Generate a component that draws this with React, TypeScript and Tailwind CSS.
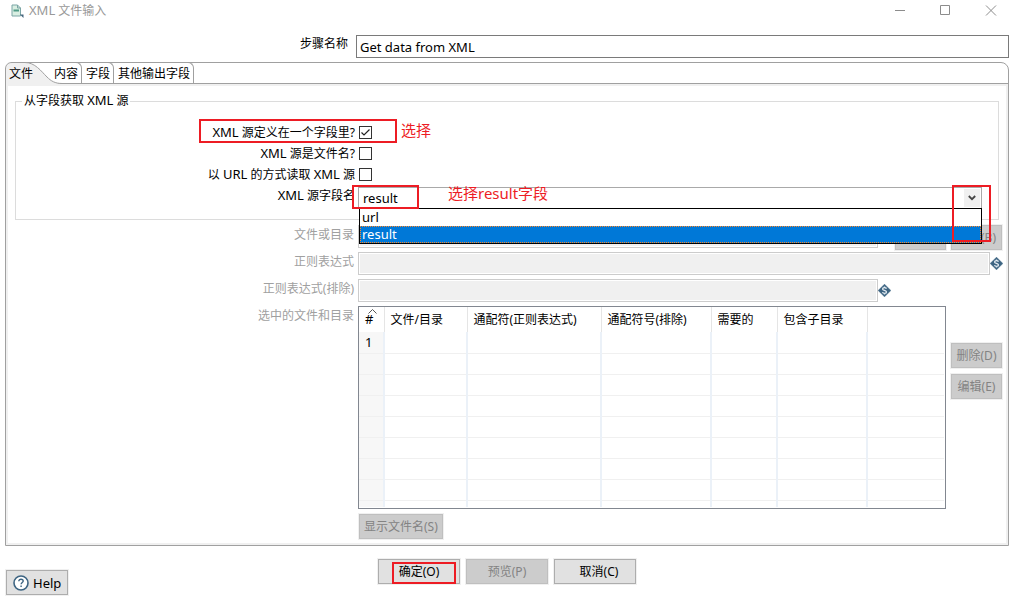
import { useState } from "react"
import type { ButtonHTMLAttributes, ReactNode } from "react"
import { clsx } from "clsx"

const tabs = ["文件", "内容", "字段", "其他输出字段"]

const columns = [
  { name: "文件/目录", width: "w-[83px]" },
  { name: "通配符(正则表达式)", width: "w-[134px]" },
  { name: "通配符号(排除)", width: "w-[110px]" },
  { name: "需要的", width: "w-[66px]" },
  { name: "包含子目录", width: "w-[90px]" },
  { name: "", width: "" },
]

const rows = [1, 2, 3, 4, 5, 6, 7, 8, 9]

// Latin letters are set one size larger than the Chinese text around them
function Latin({ children }: { children: ReactNode }) {
  return <span className="text-[13px] leading-none">{children}</span>
}

function DialogButton({ className, ...props }: ButtonHTMLAttributes<HTMLButtonElement>) {
  return (
    <button
      type="button"
      className={clsx(
        "h-[25px] shrink-0 whitespace-nowrap border border-[#adadad] bg-[#e1e1e1] outline outline-[#f0f0f0]",
        "disabled:border-[#bfbfbf] disabled:bg-[#cccccc] disabled:text-[#838383]",
        className
      )}
      {...props}
    />
  )
}

function VariableIcon() {
  return (
    <svg className="h-[13px] w-[13px] shrink-0" viewBox="0 0 13 13" aria-hidden="true">
      <path d="M6.5 0.2 12.8 6.5 6.5 12.8 0.2 6.5Z" fill="#3d6482" stroke="#3d6482" strokeLinejoin="round" strokeWidth="0.6" />
      <path
        d="M8.5 4.6C8.1 3.8 7.4 3.6 6.5 3.6 5.4 3.6 4.6 4.1 4.6 5 4.6 6.9 8.5 6 8.5 8 8.5 8.9 7.6 9.4 6.5 9.4 5.4 9.4 4.8 9 4.4 8.3M6.5 2.5V3.6M6.5 9.4V10.5"
        fill="none"
        stroke="#e6eef4"
        strokeWidth="1.3"
      />
    </svg>
  )
}

function TitleBar() {
  return (
    <header className="flex h-[22px] items-center pl-[11px] text-[#999999]">
      <svg className="mr-[5px] h-[14px] w-[13px]" viewBox="0 0 13 14" aria-hidden="true">
        <path d="M1 1H6.5L9.5 4V12H1Z" fill="#d9eee2" stroke="#7ba5a5" />
        <path d="M6.5 1V4H9.5" fill="none" stroke="#7ba5a5" />
        <path d="M2.5 6.5H8" stroke="#4e9a86" strokeWidth="2" />
        <path d="M9 10.5H12.5V14Z" fill="#44657d" />
      </svg>
      <h1 className="grow">
        <Latin>XML</Latin> 文件输入
      </h1>
      <div className="flex items-center gap-[33px] pr-[17px] pb-0.5">
        <button type="button" aria-label="Minimize">
          <svg className="h-[11px] w-[12px]" viewBox="0 0 12 11">
            <path d="M0 5.5H10" stroke="#8c8c8c" />
          </svg>
        </button>
        <button type="button" aria-label="Maximize">
          <svg className="h-[11px] w-[12px]" viewBox="0 0 12 11">
            <path d="M0.5 0.5H9.5V9.5H0.5Z" fill="none" stroke="#8c8c8c" />
          </svg>
        </button>
        <button type="button" aria-label="Close">
          <svg className="h-[11px] w-[12px]" viewBox="0 0 12 11">
            <path d="M1 0.5 11 10.5M11 0.5 1 10.5" stroke="#8c8c8c" />
          </svg>
        </button>
      </div>
    </header>
  )
}

function TabStrip() {
  return (
    <div role="tablist" className="flex h-[21px] border-b border-[#a0a0a0]">
      {tabs.map((tab, index) =>
        index === 0 ? (
          <button
            key={tab}
            type="button"
            role="tab"
            aria-selected="true"
            className="relative w-[44px] pt-0.5 pl-[3px] text-left"
          >
            <svg className="absolute -top-px -left-px h-[23px] w-[58px]" viewBox="0 0 58 23" aria-hidden="true">
              <path
                d="M0.5 23V7C0.5 3 3 0.5 7 0.5H20C30 0.5 36 9 42 15 46 19 50 21.5 57 21.5V23Z"
                fill="#f0f0f0"
              />
              <path
                d="M0.5 23V7C0.5 3 3 0.5 7 0.5H20C30 0.5 36 9 42 15 46 19 50 21.5 57 21.5"
                fill="none"
                stroke="#a0a0a0"
              />
            </svg>
            <span className="relative">{tab}</span>
          </button>
        ) : (
          <button
            key={tab}
            type="button"
            role="tab"
            aria-selected="false"
            className="-mt-px h-[21px] rounded-tr-md border-t border-r border-[#a0a0a0] pt-0.5 pr-[3px] pl-1"
          >
            {tab}
          </button>
        )
      )}
    </div>
  )
}

function CheckRow({ id, label, defaultChecked }: { id: string; label: ReactNode; defaultChecked?: boolean }) {
  return (
    <div className="flex h-[21px] items-center gap-1">
      <label htmlFor={id} className="w-[339px] text-right">
        {label}
      </label>
      <span className="relative h-[13px] w-[13px]">
        <input
          id={id}
          type="checkbox"
          defaultChecked={defaultChecked}
          className="peer block h-[13px] w-[13px] appearance-none border border-[#333333] bg-white"
        />
        <svg
          className="pointer-events-none absolute inset-0 hidden h-[13px] w-[13px] peer-checked:block"
          viewBox="0 0 13 13"
          aria-hidden="true"
        >
          <path d="M2.5 6.5 5 9 10.5 3.5" fill="none" stroke="#222222" strokeWidth="1.2" />
        </svg>
      </span>
    </div>
  )
}

function SourceField() {
  const [value, setValue] = useState("result")

  return (
    <div className="flex h-[21px] gap-[3px]">
      <label htmlFor="source-field" className="w-[339px] text-right">
        <Latin>XML</Latin> 源字段名
      </label>
      <div className="relative mr-4 grow">
        <select
          id="source-field"
          value={value}
          onChange={(e) => setValue(e.target.value)}
          className="block h-[22px] w-full appearance-none border border-[#a9a9a9] bg-white pl-1 text-[13px]"
        >
          <option>url</option>
          <option>result</option>
        </select>
        <span className="pointer-events-none absolute top-0.5 right-0.5 flex h-[18px] w-4 items-center justify-center bg-[#f0f0f0]">
          <svg className="h-[6px] w-[8px]" viewBox="0 0 8 6" aria-hidden="true">
            <path d="M0.8 1 4 4.2 7.2 1" fill="none" stroke="#444444" strokeWidth="1.8" />
          </svg>
        </span>

        {/* Open list */}
        <ul
          role="listbox"
          aria-label="XML 源字段名"
          className="absolute top-[21px] right-0 left-px z-10 border border-black bg-white text-[13px] leading-[15px]"
        >
          {["url", "result"].map((option) => (
            <li
              key={option}
              role="option"
              aria-selected={option === value}
              onClick={() => setValue(option)}
              className={clsx(
                "border border-dotted pl-px",
                option === value ? "border-[#ff8728] bg-[#0078d7] text-white" : "border-transparent"
              )}
            >
              {option}
            </li>
          ))}
        </ul>

        {/* Annotations */}
        <div className="absolute -top-0.5 -left-1.5 z-20 h-6 w-[67px] border-2 border-[#ed1c24]" />
        <div className="absolute -top-0.5 -right-[9px] z-20 h-[57px] w-[39px] border-2 border-[#ed1c24]" />
        <p className="absolute -top-[5px] left-[90px] z-20 text-[15px] leading-[22px] text-[#ed1c24]">选择result字段</p>
      </div>
    </div>
  )
}

function DisabledInput({ id }: { id: string }) {
  return (
    <input
      id={id}
      disabled
      className="h-[23px] min-w-0 grow border border-[#cccccc] bg-[#f0f0f0] ring-1 ring-white ring-inset"
    />
  )
}

function FileTable() {
  return (
    <div className="h-[203px] grow overflow-hidden border border-[#828790] bg-white pr-px pb-px">
      <div className="h-full overflow-hidden">
        <table className="w-full table-fixed border-collapse text-left" aria-labelledby="files-label">
          <thead>
            <tr className="h-[25px]">
              <th className="relative w-[25px] border-r border-[#e5e5e5] pl-1.5 font-normal">
                <svg className="absolute top-0.5 left-[9px] h-[5px] w-[9px]" viewBox="0 0 9 5" aria-hidden="true">
                  <path d="M0.5 4.5 4.5 0.5 8.5 4.5" fill="none" stroke="#555555" />
                </svg>
                <Latin>#</Latin>
              </th>
              {columns.map((column) => (
                <th
                  key={column.name}
                  className={clsx(
                    "whitespace-nowrap border-r border-[#e5e5e5] pl-1.5 font-normal last:border-r-0",
                    column.width
                  )}
                >
                  {column.name}
                </th>
              ))}
            </tr>
          </thead>
          <tbody>
            {rows.map((row) => (
              <tr key={row} className="h-[21px] border-b border-[#f0f0f0]">
                <td className="border-r-2 border-[#ebf1f8] border-b-[#f0f0f0] bg-[#f7f7f7] p-0 pl-1.5 text-[13px] leading-[18px]">
                  {row === 1 ? row : ""}
                </td>
                {columns.map((column) => (
                  <td
                    key={column.name}
                    className="border-r-2 border-[#ebf1f8] border-b-[#f0f0f0] p-0 last:border-r-0"
                  />
                ))}
              </tr>
            ))}
          </tbody>
        </table>
      </div>
    </div>
  )
}

export default function App() {
  const labelClass = "w-[347px] shrink-0 pt-px pr-px text-right text-[#a0a0a0]"

  return (
    <main className="min-h-screen bg-white font-['Noto_Sans','Noto_Sans_CJK_SC',sans-serif] text-[12px] leading-[18px] text-black">
      <TitleBar />

      <div className="mt-[13px] flex gap-2 pr-[5px]">
        <label htmlFor="step-name" className="w-[348px] text-right">
          步骤名称
        </label>
        <input
          id="step-name"
          defaultValue="Get data from XML"
          className="h-[23px] grow border border-[#7a7a7a] pl-[3px] text-[13px]"
        />
      </div>

      <section className="mx-[5px] mt-1 rounded-t-lg border border-[#a0a0a0]">
        <TabStrip />
        <div className="border-2 border-[#f0f0f0] pb-1">
          <fieldset className="mx-[7px] mt-[6px] border border-[#dcdcdc] pb-[11px]">
            <legend className="ml-[6px] px-0.5">
              从字段获取 <Latin>XML</Latin> 源
            </legend>
            <div className="relative pt-3">
              <CheckRow
                id="in-field"
                defaultChecked
                label={
                  <>
                    <Latin>XML</Latin> 源定义在一个字段里?
                  </>
                }
              />
              <CheckRow
                id="is-file"
                label={
                  <>
                    <Latin>XML</Latin> 源是文件名?
                  </>
                }
              />
              <CheckRow
                id="is-url"
                label={
                  <>
                    以 <Latin>URL</Latin> 的方式读取 <Latin>XML</Latin> 源
                  </>
                }
              />
              <div className="pointer-events-none absolute top-[9px] left-[183px] h-6 w-[198px] border-2 border-[#ed1c24]" />
              <p className="absolute top-[9px] left-[385px] text-[15px] leading-[22px] text-[#ed1c24]">选择</p>
            </div>
            <div className="pt-0.5">
              <SourceField />
            </div>
          </fieldset>

          <div className="mt-[5px] flex gap-[3px] pr-1">
            <label htmlFor="file" className={labelClass}>
              文件或目录
            </label>
            <DisabledInput id="file" />
            <div className="ml-[14px] flex gap-[5px]">
              <DialogButton disabled className="w-[51px]">
                增加(A)
              </DialogButton>
              <DialogButton disabled className="w-[51px]">
                浏览(B)
              </DialogButton>
            </div>
          </div>

          <div className="mt-0.5 flex items-start gap-[3px] pr-[3px]">
            <label htmlFor="regex" className={labelClass}>
              正则表达式
            </label>
            <div className="flex grow items-center">
              <DisabledInput id="regex" />
              <VariableIcon />
            </div>
          </div>

          <div className="mt-1 flex items-start gap-[3px] pr-[115px]">
            <label htmlFor="exclude" className={labelClass}>
              正则表达式(排除)
            </label>
            <div className="flex grow items-center">
              <DisabledInput id="exclude" />
              <VariableIcon />
            </div>
          </div>

          <div className="mt-1 flex gap-[3px] pr-1">
            <span id="files-label" className={labelClass}>
              选中的文件和目录
            </span>
            <FileTable />
            <div className="ml-0.5 flex flex-col justify-start gap-[6px] pt-[37px]">
              <DialogButton disabled className="w-[51px]">
                删除(D)
              </DialogButton>
              <DialogButton disabled className="w-[51px]">
                编辑(E)
              </DialogButton>
            </div>
          </div>

          <div className="mt-[5px] pl-[351px]">
            <DialogButton disabled className="px-1">
              显示文件名(S)
            </DialogButton>
          </div>
        </div>
      </section>

      <footer className="relative mt-[13px] flex justify-center gap-[6px] pb-[11px]">
        <div className="relative">
          <DialogButton className="w-[82px]">确定(O)</DialogButton>
          <div className="pointer-events-none absolute top-[3px] left-[14px] h-[22px] w-[64px] border-2 border-[#ed1c24]" />
        </div>
        <DialogButton disabled className="w-[82px]">
          预览(P)
        </DialogButton>
        <DialogButton className="w-[82px] pl-2">取消(C)</DialogButton>
        <DialogButton className="absolute top-[11px] left-1.5 flex items-center gap-1 px-1.5 text-[13px]">
          <svg className="h-4 w-4" viewBox="0 0 16 16" aria-hidden="true">
            <circle cx="8" cy="8" r="7" fill="#ffffff" stroke="#3d6482" strokeWidth="1.6" />
            <path
              d="M5.8 6.3C5.8 4.9 6.8 4.2 8 4.2 9.3 4.2 10.2 5 10.2 6.1 10.2 7.5 8.1 7.6 8.1 9.3M8.1 10.6V12"
              fill="none"
              stroke="#3d6482"
              strokeWidth="1.4"
            />
          </svg>
          Help
        </DialogButton>
      </footer>
    </main>
  )
}
